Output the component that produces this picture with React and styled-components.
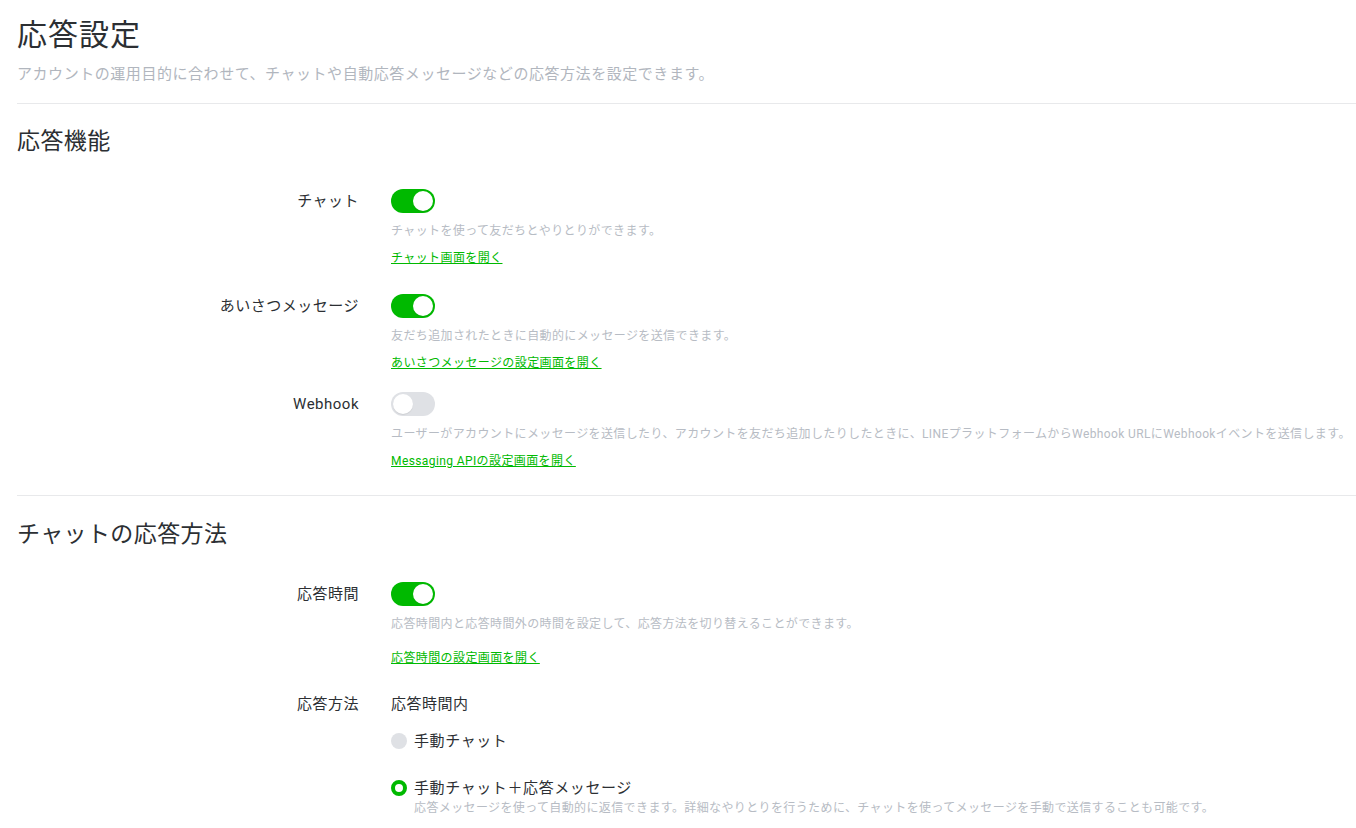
import React from 'react';
import styled, { createGlobalStyle } from 'styled-components';

const GlobalStyle = createGlobalStyle`
  body {
    margin: 0;
    background: #fff;
    font-family: Roboto, "Noto Sans CJK JP", sans-serif;
    color: #2c2f33;
  }
`;

const Page = styled.div`
  padding: 16px 0 0 17px;
`;

const PageTitle = styled.h1`
  margin: 0;
  font-size: 30px;
  font-weight: 400;
  line-height: 38px;
  letter-spacing: 1px;
  color: #2c2f33;
`;

const PageLead = styled.p`
  margin: 10px 0 0;
  font-size: 15px;
  line-height: 20px;
  letter-spacing: 0.55px;
  color: #b1b6be;
`;

const Divider = styled.hr`
  border: 0;
  border-top: 1px solid #e8e9eb;
  margin: ${(p) => p.$margin || '19px 0 0'};
`;

const SectionTitle = styled.h2`
  margin: ${(p) => p.$mt || '23px'} 0 0;
  font-size: 23px;
  font-weight: 400;
  line-height: 30px;
  letter-spacing: 0.4px;
  color: #2c2f33;
`;

const Rows = styled.div`
  display: flex;
  flex-direction: column;
  margin-top: 32px;
`;

const Row = styled.div`
  display: grid;
  grid-template-columns: 342px 1fr;
  column-gap: 32px;
  margin-top: ${(p) => p.$mt || '0'};
`;

const Label = styled.div`
  text-align: right;
  font-size: 15px;
  line-height: 20px;
  letter-spacing: 0.5px;
  padding-top: 2px;
  color: #2c2f33;
`;

const Body = styled.div`
  display: flex;
  flex-direction: column;
  align-items: flex-start;
`;

const Toggle = styled.span`
  width: 44px;
  height: 24px;
  border-radius: 12px;
  background: ${(p) => (p.$on ? '#00b900' : '#dfe1e5')};
  position: relative;
  display: inline-block;
  &::after {
    content: '';
    position: absolute;
    top: 2px;
    left: ${(p) => (p.$on ? '22px' : '2px')};
    width: 20px;
    height: 20px;
    border-radius: 50%;
    background: #fff;
    box-shadow: 0 1px 1px rgba(0, 0, 0, 0.08);
  }
`;

const Desc = styled.div`
  margin-top: ${(p) => p.$mt || '9px'};
  font-size: 12px;
  line-height: 18px;
  letter-spacing: 0.38px;
  color: #b7bcc4;
`;

const Link = styled.a`
  margin-top: ${(p) => p.$mt || '9px'};
  font-size: 12px;
  line-height: 18px;
  letter-spacing: 0.4px;
  color: #00b900;
  text-decoration: underline;
  cursor: pointer;
`;

const Value = styled.div`
  font-size: 15px;
  line-height: 20px;
  letter-spacing: 0.5px;
  padding-top: 2px;
  color: #2c2f33;
`;

const RadioRow = styled.label`
  display: flex;
  align-items: center;
  gap: 7px;
  margin-top: ${(p) => p.$mt || '16px'};
  font-size: 15px;
  line-height: 20px;
  letter-spacing: 0.6px;
  color: #2c2f33;
`;

const Radio = styled.span`
  width: 16px;
  height: 16px;
  border-radius: 50%;
  box-sizing: border-box;
  background: ${(p) => (p.$on ? '#fff' : '#dfe1e5')};
  border: ${(p) => (p.$on ? '4px solid #00b900' : 'none')};
  flex: none;
`;

const RadioDesc = styled(Desc)`
  margin-top: 1px;
  padding-left: 23px;
`;

const features = [
  {
    label: 'チャット',
    on: true,
    gap: '0',
    desc: 'チャットを使って友だちとやりとりができます。',
    link: 'チャット画面を開く',
  },
  {
    label: 'あいさつメッセージ',
    on: true,
    gap: '27px',
    desc: '友だち追加されたときに自動的にメッセージを送信できます。',
    link: 'あいさつメッセージの設定画面を開く',
  },
  {
    label: 'Webhook',
    on: false,
    gap: '20px',
    desc: 'ユーザーがアカウントにメッセージを送信したり、アカウントを友だち追加したりしたときに、LINEプラットフォームからWebhook URLにWebhookイベントを送信します。',
    link: 'Messaging APIの設定画面を開く',
  },
];

export default function App() {
  return (
    <Page>
      <GlobalStyle />
      <PageTitle>応答設定</PageTitle>
      <PageLead>アカウントの運用目的に合わせて、チャットや自動応答メッセージなどの応答方法を設定できます。</PageLead>
      <Divider />

      <SectionTitle>応答機能</SectionTitle>
      <Rows>
        {features.map((f) => (
          <Row key={f.label} $mt={f.gap}>
            <Label>{f.label}</Label>
            <Body>
              <Toggle $on={f.on} />
              <Desc>{f.desc}</Desc>
              <Link>{f.link}</Link>
            </Body>
          </Row>
        ))}
      </Rows>
      <Divider $margin="25px 0 0" />

      <SectionTitle $mt="24px">チャットの応答方法</SectionTitle>
      <Rows>
        <Row>
          <Label>応答時間</Label>
          <Body>
            <Toggle $on />
            <Desc>応答時間内と応答時間外の時間を設定して、応答方法を切り替えることができます。</Desc>
            <Link $mt="16px">応答時間の設定画面を開く</Link>
          </Body>
        </Row>
        <Row $mt="25px">
          <Label>応答方法</Label>
          <Body>
            <Value>応答時間内</Value>
            <RadioRow $mt="17px">
              <Radio />
              手動チャット
            </RadioRow>
            <RadioRow $mt="27px">
              <Radio $on />
              手動チャット＋応答メッセージ
            </RadioRow>
            <RadioDesc>応答メッセージを使って自動的に返信できます。詳細なやりとりを行うために、チャットを使ってメッセージを手動で送信することも可能です。</RadioDesc>
          </Body>
        </Row>
      </Rows>
    </Page>
  );
}
